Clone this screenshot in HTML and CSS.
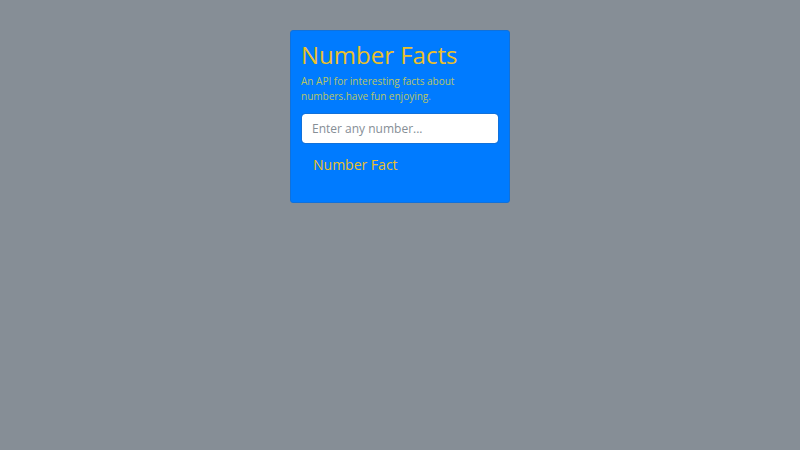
FILE: index.html
```html
<!DOCTYPE html>
<html lang="en">
<head>
	<meta charset="UTF-8">
	<meta name="viewport" content="width=device-width, initial-scale=1">
	<title>Number Facts</title>
	<link rel="stylesheet" href="styles.css">
</head>
<body>
	<div class="container">
		<div class="card">
			<h1 class="title">Number Facts</h1>
			<p class="lead"><label for="numberInput">An API for interesting facts about numbers.have fun enjoying.</label></p>
			<input type="text" id="numberInput" class="form-control" placeholder="Enter any number...">
			<div id="fact" class="card-body">
				<h4 class="card-title">Number Fact</h4>
				<p id="factText" class="card-text"></p>
			</div>
		</div>
	</div>
</body>
</html>
```

FILE: styles.css
```css
* {
	box-sizing: border-box;
}
body {
	margin: 0;
	background-color: #868e96;
	color: #ecc02a;
	font-family: "Open Sans", "Noto Sans", sans-serif;
}
.container {
	width: 100%;
	max-width: 220px;
	margin: 30px auto 0;
}
.card {
	padding: 9px 10px;
	background-color: #007bff;
	border: 1px solid #1171da;
	border-radius: 3px;
}
.title {
	margin: 0;
	font-size: 24px;
	font-weight: 400;
	line-height: 30px;
}
.lead {
	margin: 4px 0 9px;
	color: #b8c566;
	font-size: 10px;
	line-height: 15px;
}
.form-control {
	display: block;
	width: 100%;
	padding: 6px 10px 5px;
	border: 1px solid #1171da;
	border-radius: 4px;
	background-color: #fff;
	background-clip: padding-box;
	color: #495057;
	font-family: inherit;
	font-size: 12px;
	line-height: 18px;
}
.form-control::placeholder {
	color: #868e96;
	opacity: 1;
}
.card-body {
	padding: 11px 12px 18px;
}
.card-title {
	margin: 0;
	font-size: 14px;
	font-weight: 400;
	line-height: 20px;
}
.card-text {
	margin: 0;
}
```
